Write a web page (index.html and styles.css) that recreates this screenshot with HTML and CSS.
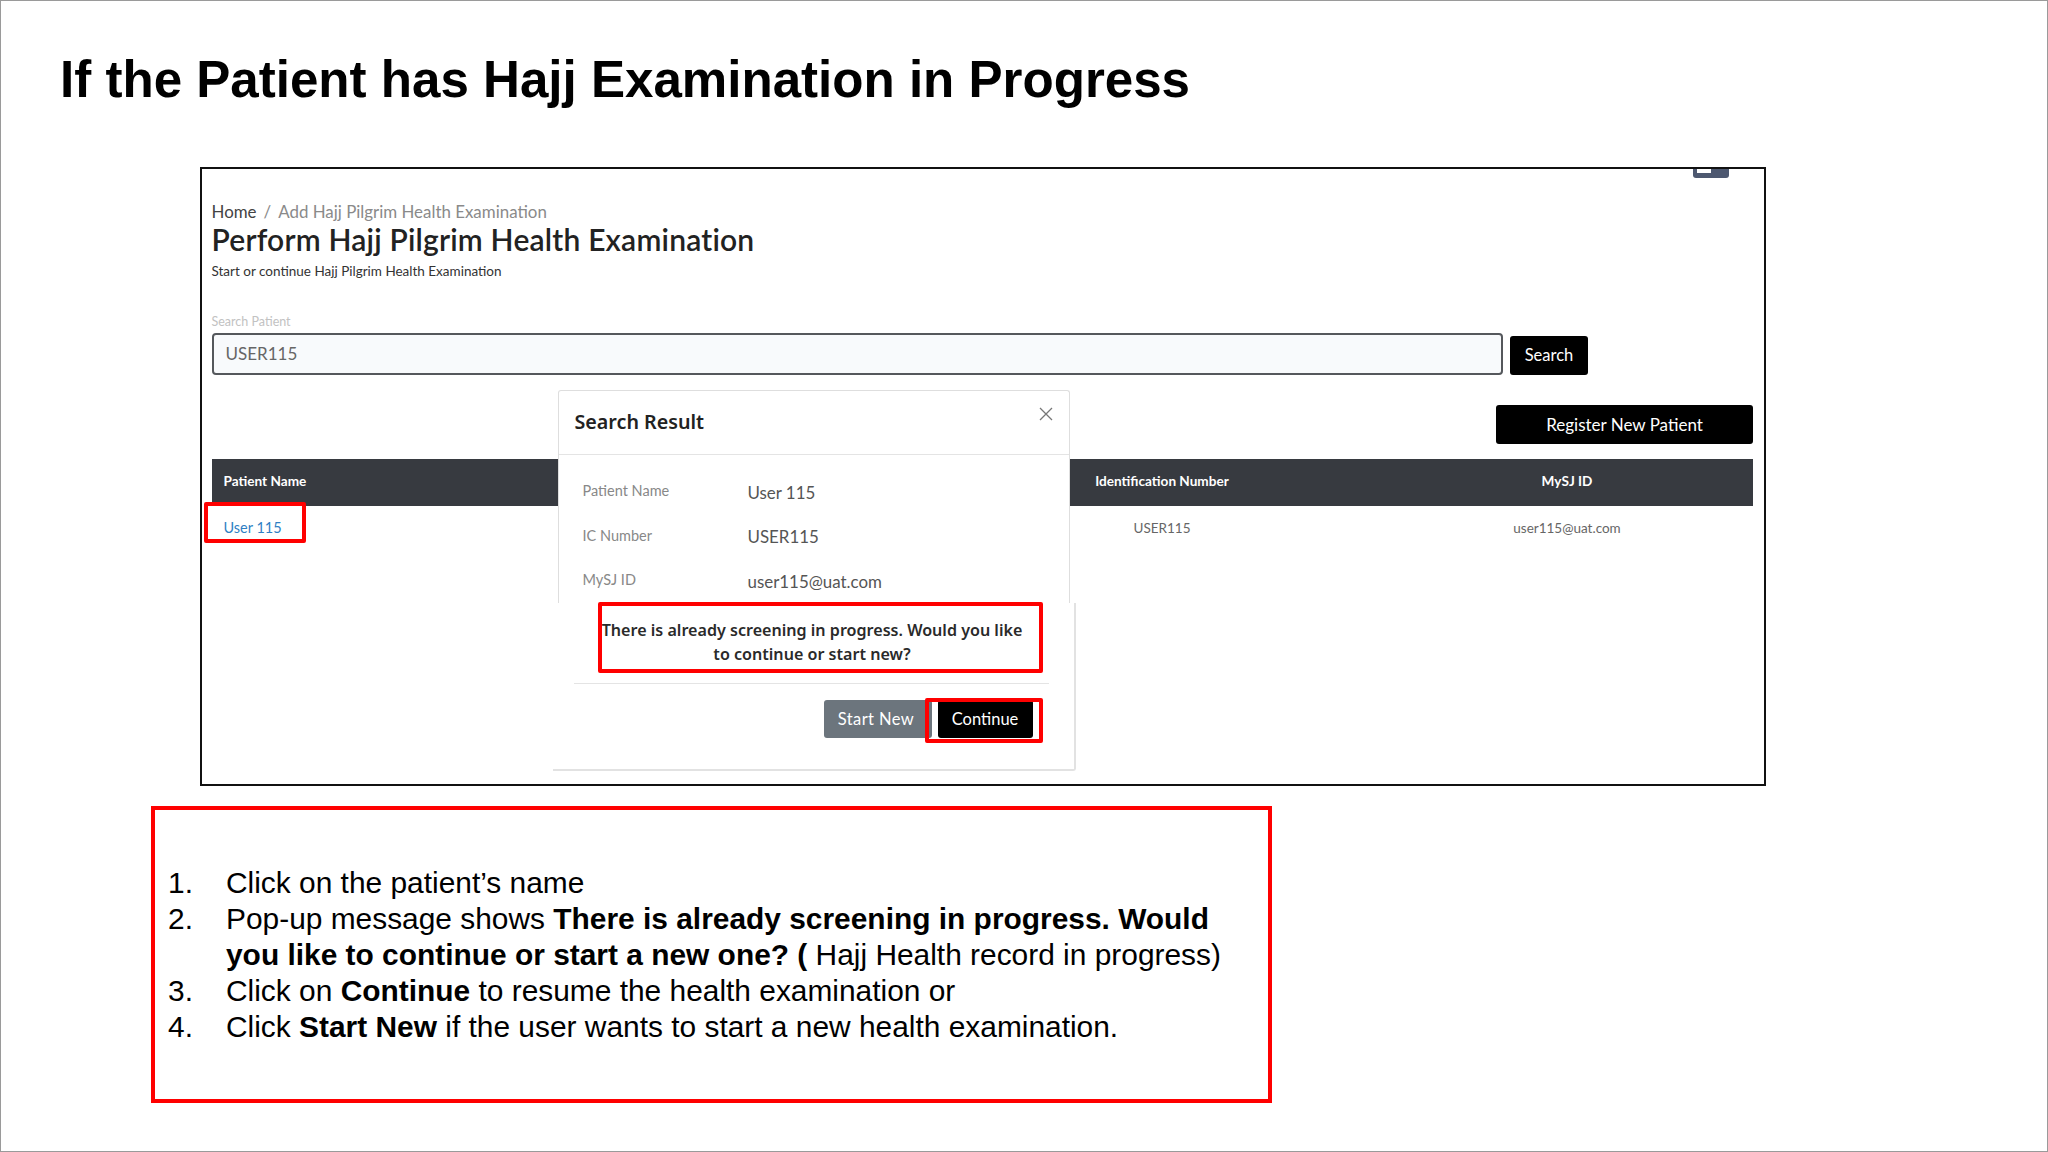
FILE: index.html
```html
<!DOCTYPE html>
<html lang="en">
<head>
<meta charset="utf-8">
<title>If the Patient has Hajj Examination in Progress</title>
<link rel="stylesheet" href="styles.css">
</head>
<body>
<main class="slide">
  <h1 class="slide-title">If the Patient has Hajj Examination in Progress</h1>
  <section class="shot">
    <div class="topbar"><span class="badge"><span class="badge-dash"></span></span></div>
    <nav class="crumbs"><span class="crumb-home">Home</span><span class="crumb-sep">/</span><span class="crumb-cur">Add Hajj Pilgrim Health Examination</span></nav>
    <h2 class="page-title">Perform Hajj Pilgrim Health Examination</h2>
    <p class="page-sub">Start or continue Hajj Pilgrim Health Examination</p>
    <div class="field-label">Search Patient</div>
    <div class="search-row">
      <div class="search-input">USER115</div>
      <button class="btn btn-search">Search</button>
    </div>
    <div class="action-row"><button class="btn btn-register">Register New Patient</button></div>
    <div class="table">
      <div class="thead">
        <div class="th th-left">Patient Name</div>
        <div class="th">Identification Number</div>
        <div class="th">MySJ ID</div>
      </div>
      <div class="trow">
        <div class="td td-left"><a class="link">User 115</a></div>
        <div class="td">USER115</div>
        <div class="td">user115@uat.com</div>
      </div>
    </div>

    <div class="modal">
      <div class="modal-top">
        <header class="modal-head">
          <span class="modal-title">Search Result</span>
          <svg class="modal-close" viewBox="0 0 14 14" aria-hidden="true"><path d="M1 1L13 13M13 1L1 13"/></svg>
        </header>
        <dl class="modal-body">
          <div class="kv"><dt>Patient Name</dt><dd>User 115</dd></div>
          <div class="kv"><dt>IC Number</dt><dd>USER115</dd></div>
          <div class="kv"><dt>MySJ ID</dt><dd>user115@uat.com</dd></div>
        </dl>
      </div>
      <div class="modal-bottom">
        <p class="modal-msg">There is already screening in progress. Would you like<br>to continue or start new?</p>
        <div class="modal-foot">
          <button class="btn btn-grey">Start New</button>
          <button class="btn btn-continue">Continue</button>
        </div>
      </div>
    </div>

    <span class="mark mark-name"></span>
    <span class="mark mark-msg"></span>
    <span class="mark mark-continue"></span>
  </section>
  <section class="steps">
    <ol class="step-list">
      <li><span>Click on the patient’s name</span></li>
      <li><span>Pop-up message shows <b>There is already screening in progress. Would you like to continue or start a new one? (</b> Hajj Health record in progress)</span></li>
      <li><span>Click on <b>Continue</b> to resume the health examination or</span></li>
      <li><span>Click <b>Start New</b> if the user wants to start a new health examination.</span></li>
    </ol>
  </section>
</main>
</body>
</html>
```
FILE: styles.css
```css
* { box-sizing: border-box; }
html, body { margin: 0; padding: 0; background: #fff; }
.slide {
  width: 2048px; height: 1152px; padding: 47px 0 0 0;
  border: 1px solid #9a9a9a; overflow: hidden;
  font-family: "Liberation Sans", Arial, sans-serif; color: #000;
}
.slide-title { margin: 0 0 0 59px; font-size: 51.1px; line-height: 64px; font-weight: 700; }
.shot {
  position: relative; width: 1566px; height: 619px; margin: 55px 0 0 199px;
  border: 2px solid #111; padding: 0 11px 0 9.5px;
  font-family: Lato, "Noto Sans", sans-serif; color: #333;
}
.topbar { height: 0; position: relative; }
.badge { position: absolute; top: 0; left: 1481px; width: 36px; height: 9px; background: #4d5870; border-radius: 0 0 3px 3px; }
.badge-dash { display: block; width: 14px; height: 4px; margin-left: 4px; background: #fff; }
.crumbs { display: flex; gap: 7px; padding-top: 33px; height: 53px; font-size: 16.9px; line-height: 20px; color: #8a8a8a; }
.crumb-home { color: #444; }
.page-title { margin: -1px 0 0; font-size: 30px; line-height: 36px; font-weight: 600; color: #222; letter-spacing: .2px; }
.page-sub { margin: 5px 0 0; font-size: 13.5px; line-height: 18px; color: #333; }
.field-label { margin-top: 34px; font-size: 12.5px; line-height: 16px; color: #c2c2c2; }
.search-row { display: flex; align-items: flex-end; gap: 7px; margin-top: 2.5px; }
.search-input {
  width: 1291.5px; height: 42px; padding: 0 12px; display: flex; align-items: center;
  background: #f8fafc; border: 2px solid #55585c; border-radius: 4px;
  font-size: 17px; color: #666;
}
.btn { border: 0; margin: 0; padding: 0; font-family: inherit; color: #fff; background: #000; border-radius: 3px; display: block; }
.btn-search { width: 78px; height: 39px; font-size: 16.5px; }
.action-row { display: flex; justify-content: flex-end; margin-top: 30.5px; }
.btn-register { width: 257px; height: 39px; font-size: 17px; }
.table { margin-top: 15px; }
.thead, .trow { display: grid; grid-template-columns: 732.5px 436px 374px; }
.thead { height: 47px; background: #373a40; align-items: center; color: #fff; }
.th { font-size: 13.6px; font-weight: 700; text-align: center; padding-bottom: 3px; }
.thead .th-left, .trow .td-left { text-align: left; padding-left: 12px; }
.trow { padding-top: 13px; }
.td { font-size: 13.5px; line-height: 18px; text-align: center; color: #666; }
.link { color: #2f7fc4; font-size: 14.5px; }

.modal { position: absolute; left: 350.5px; top: 221px; width: 523px; display: flex; flex-direction: column; align-items: stretch; }
.modal-top { margin: 0 6px 0 5px; height: 213px; background: #fff; border: 1px solid #dedede; border-bottom: 0; border-radius: 3px 3px 0 0; }
.modal-head { position: relative; height: 64px; padding: 19px 16px 0; border-bottom: 1px solid #e4e4e4; }
.modal-title { font-family: "Noto Sans", sans-serif; font-size: 19.7px; line-height: 24px; font-weight: 600; color: #222; }
.modal-close { position: absolute; right: 16px; top: 16px; width: 14px; height: 14px; fill: none; stroke: #777; stroke-width: 1.3; }
.modal-body { margin: 0; padding: 15px 0 0 24px; }
.kv { display: flex; height: 44.5px; align-items: center; }
.kv dt { width: 165px; font-size: 14.5px; color: #888; margin-top: -3px; }
.kv dd { margin: 0; font-size: 16.9px; color: #555; }
.modal-bottom { height: 168px; background: #fff; border-right: 2px solid #e2e2e2; border-bottom: 2px solid #e2e2e2; border-radius: 0 0 3px 0; }
.modal-msg { margin: 0; padding-top: 15px; height: 80px; text-align: center; font-family: "Noto Sans", sans-serif; font-size: 16.1px; line-height: 24px; font-weight: 600; color: #2a2a2a; transform: translateX(-1px); }
.modal-foot { display: flex; justify-content: flex-end; margin: 0 25px 0 21px; padding: 15.5px 16px 0 0; border-top: 1px solid #e4e4e4; gap: 6px; height: 56px; }
.btn-grey { width: 108px; height: 38px; background: #6c757d; font-size: 16.5px; letter-spacing: .4px; padding-right: 3px; }
.btn-continue { width: 95px; height: 38px; font-size: 16.5px; }

.mark { position: absolute; border: 4px solid #f00; border-radius: 2px; }
.mark-name { left: 2px; top: 333px; width: 102px; height: 41px; }
.mark-msg { left: 396px; top: 433px; width: 445px; height: 71px; }
.mark-continue { left: 723px; top: 529px; width: 118px; height: 45px; }

.steps { width: 1121px; height: 297px; margin: 20px 0 0 150px; border: 4px solid #f00; padding: 55px 0 0 13px; }
.step-list { margin: 0; padding: 0; list-style: none; counter-reset: step; font-size: 29.9px; line-height: 36px; color: #000; }
.step-list li { counter-increment: step; display: flex; }
.step-list li::before { content: counter(step) "."; flex: 0 0 58px; }
```
